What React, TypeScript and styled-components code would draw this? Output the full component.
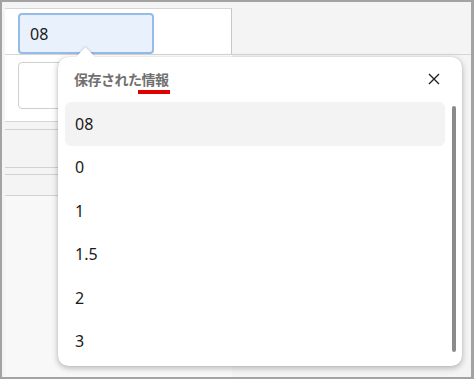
import React, {useState} from 'react';
import styled, {createGlobalStyle} from 'styled-components';

const GlobalStyle = createGlobalStyle`
  html, body {
    margin: 0;
    padding: 0;
    background: #ffffff;
  }
  body {
    font-family: "Segoe UI", "Noto Sans", "Noto Sans CJK JP", sans-serif;
  }
`;

const Frame = styled.div`
  position: relative;
  width: 474px;
  height: 379px;
  box-sizing: border-box;
  border: 2px solid #a3a3a3;
  border-right-width: 3px;
  background: #f4f4f4;
  overflow: hidden;
`;

const Sheet = styled.div`
  display: flex;
  flex-direction: column;
  padding: 6px 0 0 3px;
`;

const TopRow = styled.div`
  display: flex;
  border-bottom: 1px solid #d6d6d6;
`;

const FieldCell = styled.div`
  width: 227px;
  height: 46px;
  box-sizing: border-box;
  background: #ffffff;
  border-top: 1px solid #d6d6d6;
  border-right: 1px solid #c8c8c8;
  padding: 4px 0 0 13px;
`;

const Field = styled.div<{$active?: boolean}>`
  width: 136px;
  height: 41px;
  box-sizing: border-box;
  border: ${p => (p.$active ? '2px solid #94bbea' : '1px solid #cfcfcf')};
  border-radius: 4px;
  background: ${p => (p.$active ? '#e9f1fd' : '#ffffff')};
  color: #1a1a1a;
  font-size: 16px;
  display: flex;
  align-items: center;
  padding-left: 10px;
`;

const SecondRow = styled.div`
  width: 227px;
  height: 67px;
  box-sizing: border-box;
  background: #ffffff;
  border-bottom: 1px solid #d6d6d6;
  padding: 7px 0 0 13px;
`;

const BlankField = styled(Field)`
  height: 47px;
`;

const Rule = styled.div<{$gap: number}>`
  width: 227px;
  margin-top: ${p => p.$gap}px;
  border-top: 1px solid #d2d2d2;
`;

const LowerBlock = styled.div`
  width: 227px;
  height: 190px;
  background: #f8f8f8;
`;

const Popup = styled.div`
  position: absolute;
  left: 56px;
  top: 55px;
  width: 404px;
  height: 309px;
  box-sizing: border-box;
  background: #ffffff;
  border-radius: 10px;
  box-shadow: 0 2px 6px rgba(0, 0, 0, 0.28), 0 0 1px rgba(0, 0, 0, 0.2);
  padding: 8px 6px 0 7px;
  display: flex;
  flex-direction: column;

  &::before {
    content: '';
    position: absolute;
    left: 21px;
    top: -7px;
    width: 13px;
    height: 13px;
    background: #ffffff;
    transform: rotate(45deg);
    box-shadow: -1px -1px 2px rgba(0, 0, 0, 0.12);
  }
`;

const Header = styled.div`
  display: flex;
  align-items: center;
  justify-content: space-between;
  padding: 0 12px 0 9px;
  height: 28px;
`;

const Title = styled.h3`
  margin: 0;
  font-size: 14px;
  font-weight: 700;
  color: #707070;
  font-family: "Noto Sans CJK JP", "Noto Sans", sans-serif;
  letter-spacing: -0.5px;
`;

const Mark = styled.span`
  position: relative;

  &::after {
    content: '';
    position: absolute;
    left: -4px;
    right: -1px;
    bottom: -5px;
    height: 4px;
    background: #e00000;
  }
`;

const Close = styled.button`
  border: none;
  background: none;
  padding: 0;
  width: 20px;
  height: 20px;
  display: flex;
  align-items: center;
  justify-content: center;
  color: #222;
  cursor: pointer;
`;

const Body = styled.div`
  display: flex;
  gap: 7px;
  margin-top: 9px;
  flex: 1;
`;

const List = styled.div`
  flex: 1;
  display: flex;
  flex-direction: column;
`;

const Item = styled.div<{$selected?: boolean}>`
  height: 43.5px;
  display: flex;
  align-items: center;
  padding-left: 10px;
  border-radius: 6px;
  font-size: 16px;
  color: #1a1a1a;
  background: ${p => (p.$selected ? '#f3f3f3' : 'transparent')};
`;

const Scrollbar = styled.div`
  width: 4px;
  margin-top: 4px;
  height: 246px;
  border-radius: 2px;
  background: #8b8b8b;
`;

const values = ['08', '0', '1', '1.5', '2', '3'];

function App() {
    const [selected] = useState('08');
    return (
        <Frame>
            <GlobalStyle/>
            <Sheet>
                <TopRow>
                    <FieldCell>
                        <Field $active>{selected}</Field>
                    </FieldCell>
                </TopRow>
                <SecondRow>
                    <BlankField/>
                </SecondRow>
                <Rule $gap={7}/>
                <Rule $gap={37}/>
                <Rule $gap={6}/>
                <Rule $gap={20}/>
                <LowerBlock/>
            </Sheet>
            <Popup>
                <Header>
                    <Title>保存された<Mark>情報</Mark></Title>
                    <Close aria-label="close">
                        <svg width="12" height="12" viewBox="0 0 12 12">
                            <path d="M1 1L11 11M11 1L1 11" stroke="#222" strokeWidth="1.4" fill="none"/>
                        </svg>
                    </Close>
                </Header>
                <Body>
                    <List>
                        {values.map(v => (
                            <Item key={v} $selected={v === selected}>{v}</Item>
                        ))}
                    </List>
                    <Scrollbar/>
                </Body>
            </Popup>
        </Frame>
    );
}

export default App;
